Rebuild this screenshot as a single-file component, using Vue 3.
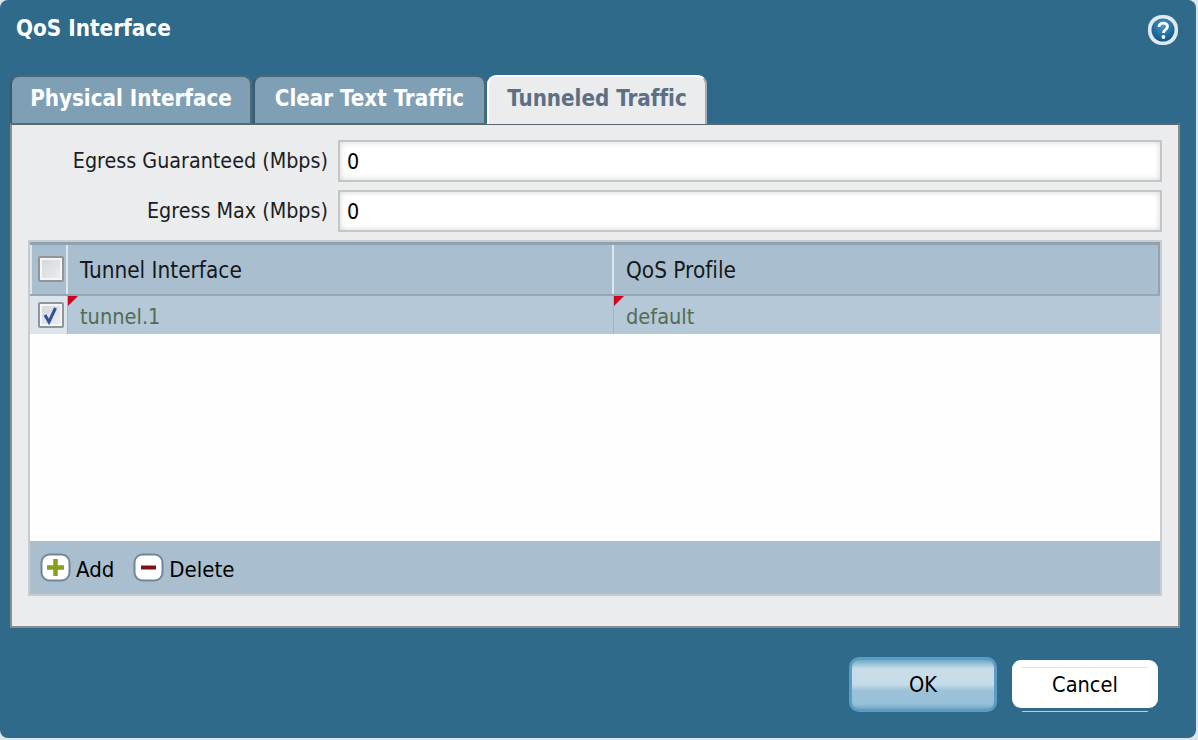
<script setup>
const tabs = [
  { label: 'Physical Interface', w: 242, active: false },
  { label: 'Clear Text Traffic', w: 233, active: false },
  { label: 'Tunneled Traffic', w: 220, active: true }
]
const fields = [
  { label: 'Egress Guaranteed (Mbps)', value: '0' },
  { label: 'Egress Max (Mbps)', value: '0' }
]
</script>

<template>
  <div class="win">
    <header class="head">
      <h1 class="title">QoS Interface</h1>
      <svg class="help" width="32" height="32" viewBox="0 0 32 32">
        <defs>
          <radialGradient id="hg" cx="50%" cy="30%" r="70%">
            <stop offset="0" stop-color="#4a97c9" />
            <stop offset="1" stop-color="#0e5488" />
          </radialGradient>
        </defs>
        <rect x="1" y="1" width="30" height="30" rx="14" fill="#dfeaf1" />
        <circle cx="16" cy="16" r="11.500" fill="url(#hg)" />
        <path d="M12 13c0-5 8.500-5 8.500-.5 0 3-4 3-4 6.500" fill="none" stroke="#fff" stroke-width="2.800" />
        <circle cx="16.400" cy="23" r="1.900" fill="#fff" />
      </svg>
    </header>

    <nav class="tabs">
      <div
        v-for="t in tabs"
        :key="t.label"
        class="tab"
        :class="{ active: t.active }"
        :style="{ width: t.w + 'px' }"
      >{{ t.label }}</div>
    </nav>

    <section class="panel">
      <div v-for="f in fields" :key="f.label" class="field">
        <label class="flabel">{{ f.label }}</label>
        <div class="input">{{ f.value }}</div>
      </div>

      <div class="grid">
        <div class="row hrow">
          <div class="c0"><span class="cb"></span></div>
          <div class="c1">Tunnel Interface</div>
          <div class="c2">QoS Profile</div>
        </div>
        <div class="row drow">
          <div class="c0">
            <span class="cb checked">
              <svg width="22" height="22" viewBox="0 0 22 22">
                <path d="M5 11l4 7L15.500 4" fill="none" stroke="#30509f" stroke-width="3" />
              </svg>
            </span>
          </div>
          <div class="c1 dirty">tunnel.1</div>
          <div class="c2 dirty">default</div>
        </div>
        <div class="gbody"></div>
        <div class="gfoot">
          <button class="act add">
            <svg width="31" height="29" viewBox="0 0 31 29">
              <rect x="1.500" y="1.500" width="28" height="26" rx="8" fill="#fff" stroke="#6f8799" stroke-width="2" />
              <path d="M15.500 6v17M7 14.500h17" stroke="#85a020" stroke-width="4.500" />
            </svg>
            <span>Add</span>
          </button>
          <button class="act del">
            <svg width="31" height="29" viewBox="0 0 31 29">
              <rect x="1.500" y="1.500" width="28" height="26" rx="8" fill="#fff" stroke="#6f8799" stroke-width="2" />
              <path d="M8 14.500h15" stroke="#7a1414" stroke-width="4" />
            </svg>
            <span>Delete</span>
          </button>
        </div>
      </div>
    </section>

    <footer class="foot">
      <button class="btn ok">OK</button>
      <button class="btn cancel">Cancel</button>
    </footer>
  </div>
</template>

<style>
html, body { margin: 0; background: #dfe5ea; }
</style>

<style scoped>
.win {
  width: 1196px;
  height: 738px;
  background: #306a8a;
  border-radius: 8px;
  font-family: "DejaVu Sans", "Noto Sans", sans-serif;
  font-stretch: condensed;
  font-variant-ligatures: none;
  overflow: hidden;
  box-sizing: border-box;
  padding: 0 16px 0 10px;
}
.head {
  height: 75px;
  display: flex;
  justify-content: space-between;
  box-sizing: border-box;
  padding: 12px 0 0 6px;
}
.title {
  margin: 0;
  font-size: 22.300px;
  line-height: 32px;
  font-weight: 700;
  color: #fff;
}
.help { margin: 2px 1px 0 0; }
.tabs {
  display: flex;
  height: 48px;
  gap: 1px;
}
.tab {
  box-sizing: border-box;
  height: 48px;
  border: 2px solid #4f6673;
  border-bottom: 0;
  border-left-color: #3c5a6c;
  border-right-color: #56666f;
  border-radius: 9px 9px 0 0;
  background: #7f9fb5;
  color: #fff;
  font-size: 22.200px;
  font-weight: 700;
  line-height: 43px;
  text-align: center;
}
.tab.active {
  height: 49px;
  position: relative;
  z-index: 1;
  background: #ebecee;
  border-color: #fff;
  border-right-color: #a6adb2;
  color: #5b7083;
}
.panel {
  height: 505px;
  box-sizing: border-box;
  background: #ebecee;
  border: 2px solid #8a8d90;
  border-top-color: #5a6670;
  padding: 15px 16px 0 16px;
}
.field {
  display: flex;
  align-items: center;
  height: 42px;
  margin-bottom: 8px;
}
.flabel {
  width: 300px;
  flex: none;
  text-align: right;
  font-size: 21.300px;
  line-height: 42px;
  color: #1a1e22;
}
.input {
  flex: 1;
  margin-left: 10px;
  height: 42px;
  box-sizing: border-box;
  border: 2px solid #c4c6c6;
  background: #fff;
  box-shadow: inset 0 0 6px #d4d4d4;
  font-size: 21.300px;
  line-height: 40px;
  padding-left: 7px;
  color: #000;
}
.grid {
  height: 356px;
  box-sizing: border-box;
  border: 2px solid #c9cbcc;
  display: flex;
  flex-direction: column;
  background: #fdfefd;
}
.row { display: flex; flex: none; }
.hrow {
  height: 54px;
  background: #a9bfcf;
  border-top: 3px solid #8da3b4;
  border-bottom: 2px solid #92a8b9;
  box-sizing: border-box;
  color: #14181c;
}
.drow {
  height: 38px;
  background: #b4c8d7;
  color: #546b52;
}
.c0 {
  width: 38px;
  flex: none;
  box-sizing: border-box;
  display: flex;
  align-items: center;
  padding-left: 8px;
}
.hrow .c0 { border-right: 2px solid #dfe7ee; border-left: 2px solid #dfe7ee; padding-left: 6px; }
.drow .c0 { background: #dde5ec; border-right: 1px solid #a2b6c5; }
.c1, .c2 {
  box-sizing: border-box;
  font-size: 21.600px;
  padding-left: 12px;
  position: relative;
}
.hrow .c1, .hrow .c2 { line-height: 50px; font-size: 22.400px; }
.drow .c1, .drow .c2 { line-height: 41px; }
.c1 { width: 546px; flex: none; }
.c2 { flex: 1; }
.hrow .c1 { border-right: 2px solid #dfe7ee; }
.hrow .c2 { border-right: 2px solid #8da3b4; }
.drow .c1 { border-right: 1px solid #a2b6c5; }
.dirty::before {
  content: "";
  position: absolute;
  left: 0;
  top: 0;
  border-top: 10px solid #d0021b;
  border-right: 10px solid transparent;
}
.cb {
  width: 26px;
  height: 26px;
  box-sizing: border-box;
  border: 2px solid #8f969b;
  box-shadow: inset 0 0 0 2px #f4f5f6;
  background: linear-gradient(135deg, #d3d5d8, #eceef0);
  display: block;
  border-radius: 2px;
  overflow: hidden;
  margin-top: -2px;
}
.cb svg { display: block; }
.drow .cb { margin-top: 0; }
.gbody { flex: 1; }
.gfoot {
  height: 53px;
  flex: none;
  background: #a9bfcf;
  display: flex;
  align-items: center;
  padding-left: 10px;
  gap: 19px;
}
.act {
  display: flex;
  align-items: center;
  gap: 5px;
  padding: 0;
  border: 0;
  background: none;
  font: inherit;
  font-size: 22px;
  color: #000;
}
.act span { padding-top: 3px; }
.foot {
  display: flex;
  justify-content: flex-end;
  gap: 15px;
  padding: 29px 22px 0 0;
}
.btn {
  font: inherit;
  font-size: 21.600px;
  color: #000;
  cursor: default;
  padding: 0;
}
.ok {
  width: 148px;
  height: 55px;
  border: 3px solid #5b9cc0;
  border-radius: 10px;
  background: linear-gradient(#6fa9c9 0, #c9dde9 18%, #c6dbe8 50%, #9cc2d9 62%, #96bfd7 90%, #6fa9c9 100%);
}
.cancel {
  width: 146px;
  height: 48px;
  margin-top: 3px;
  border: 0;
  border-radius: 9px;
  background: #fff;
  position: relative;
}
.cancel::before {
  content: "";
  position: absolute;
  left: 10px;
  right: 10px;
  top: 7px;
  border-top: 1px solid #d8e4ec;
}
.cancel::after {
  content: "";
  position: absolute;
  left: 10px;
  right: 10px;
  bottom: -4px;
  border-top: 1px solid #b9cedb;
}
</style>
